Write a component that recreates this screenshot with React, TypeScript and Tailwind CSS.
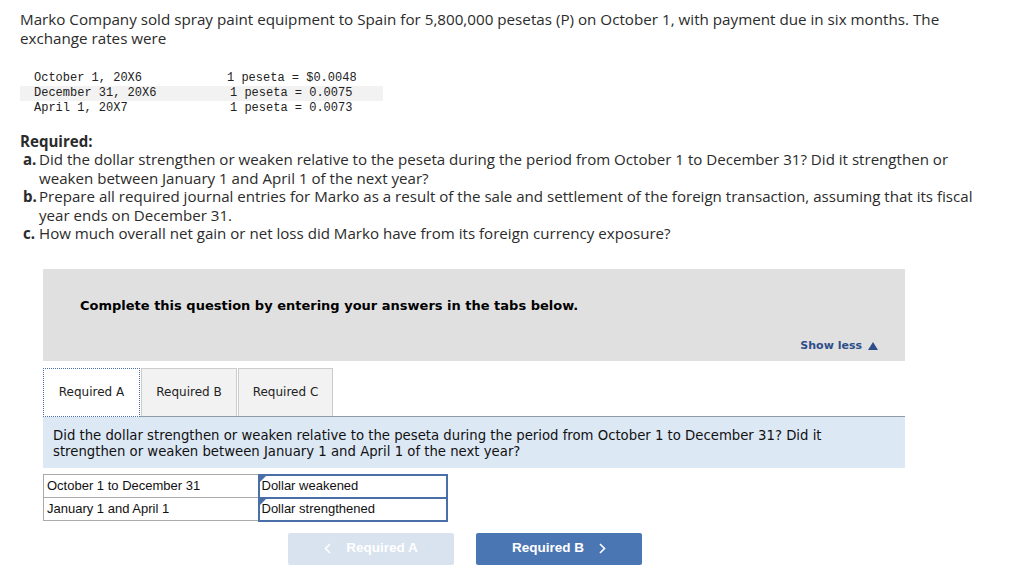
import React from 'react';

const rates = [
  { date: 'October 1, 20X6', rate: '1 peseta = $0.0048', shade: false, indent: false },
  { date: 'December 31, 20X6', rate: '1 peseta = 0.0075', shade: true, indent: true },
  { date: 'April 1, 20X7', rate: '1 peseta = 0.0073', shade: false, indent: true },
];

const answers = [
  { period: 'October 1 to December 31', value: 'Dollar weakened' },
  { period: 'January 1 and April 1', value: 'Dollar strengthened' },
];

const verdana = "font-['Verdana','DejaVu_Sans',sans-serif]";

const Chevron = ({ dir }: { dir: 'left' | 'right' }) => (
  <svg width="7" height="11" viewBox="0 0 7 11" fill="none">
    <path
      d={dir === 'left' ? 'M6 1 L1.5 5.5 L6 10' : 'M1 1 L5.5 5.5 L1 10'}
      stroke="white"
      strokeWidth="1.6"
    />
  </svg>
);

export default function App() {
  return (
    <div className="w-[1024px] h-[584px] bg-white text-[#333] overflow-hidden font-['Open_Sans',sans-serif]">
      <div className="pl-5 pt-[10px] pr-[60px] text-[15.2px] leading-[19px] text-[#2b2b2b]">
        Marko Company sold spray paint equipment to Spain for 5,800,000 pesetas (P) on October 1, with payment due in six months. The exchange rates were
      </div>

      <div className="mt-[23px] ml-5 w-[363px] font-['Liberation_Mono',monospace] text-[12px] leading-[15px] text-[#222]">
        {rates.map((r) => (
          <div key={r.date} className={`flex ${r.shade ? 'bg-[#f2f2f2]' : ''}`}>
            <span className="w-[193px] pl-[14px] whitespace-pre">{r.date}</span>
            <span className={`whitespace-pre ${r.indent ? 'pl-[17px]' : 'pl-[14px]'}`}>{r.rate}</span>
          </div>
        ))}
      </div>

      <div className="mt-[17px] pl-5 text-[15.1px] leading-[18.5px] text-[#2b2b2b]">
        <div className="font-bold leading-[17px]">Required:</div>
        <div className="flex pl-[3px]">
          <span className="w-4 font-bold">a.</span>
          <span className="w-[920px]">
            Did the dollar strengthen or weaken relative to the peseta during the period from October 1 to December 31? Did it strengthen or weaken between January 1 and April 1 of the next year?
          </span>
        </div>
        <div className="flex pl-[3px]">
          <span className="w-4 font-bold">b.</span>
          <span className="w-[950px]">
            Prepare all required journal entries for Marko as a result of the sale and settlement of the foreign transaction, assuming that its fiscal year ends on December 31.
          </span>
        </div>
        <div className="flex pl-[3px]">
          <span className="w-4 font-bold">c.</span>
          <span>How much overall net gain or net loss did Marko have from its foreign currency exposure?</span>
        </div>
      </div>

      <div className={`ml-[43px] mt-[26px] w-[862px] ${verdana}`}>
        <div className="h-[92px] bg-[#e0e0e0] flex flex-col">
          <div className="pl-[37px] pt-[27px] text-[13px] font-bold text-black">
            Complete this question by entering your answers in the tabs below.
          </div>
          <div className="mt-auto mb-[6px] pr-[27px] flex justify-end items-center gap-[6px] text-[11px] font-bold text-[#2d4e8a]">
            Show less
            <svg width="10" height="8" viewBox="0 0 10 8">
              <path d="M5 0 L10 8 L0 8 Z" fill="#2d4e8a" />
            </svg>
          </div>
        </div>

        <div className="mt-[7px] flex items-end border-b border-[#8e9bab] h-[49px]">
          <button className="h-[49px] w-[97px] bg-white border border-dotted border-[#4a6fb5] text-[12px] text-[#222] -mb-px">
            Required A
          </button>
          <button className="h-[48px] w-[96px] ml-px bg-[#f2f2f2] border border-[#ccc] border-b-0 text-[12px] text-[#222]">
            Required B
          </button>
          <button className="h-[48px] w-[95px] ml-px bg-[#f2f2f2] border border-[#ccc] border-b-0 text-[12px] text-[#222]">
            Required C
          </button>
        </div>

        <div className="h-[51px] bg-[#dde8f5] pl-[10px] pt-[11px] pr-[60px] text-[13.25px] leading-[16px] text-[#111]">
          Did the dollar strengthen or weaken relative to the peseta during the period from October 1 to December 31? Did it strengthen or weaken between January 1 and April 1 of the next year?
        </div>

        <table className="mt-[6px] border-collapse font-['Liberation_Sans',Arial,sans-serif] text-[13px] text-[#111]">
          <tbody>
            {answers.map((a) => (
              <tr key={a.period} className="h-[23px]">
                <td className="w-[215px] border border-[#aaa] pl-[3px] py-0">{a.period}</td>
                <td className="w-[188px] border-2 border-[#4a6fa8] pl-[2px] py-0 relative">
                  <span className="absolute left-0 top-0 w-0 h-0 border-t-[6px] border-r-[6px] border-t-[#4a6fa8] border-r-transparent" />
                  {a.value}
                </td>
              </tr>
            ))}
          </tbody>
        </table>

        <div className="mt-[11px] ml-[245px] flex gap-[22px] font-['Liberation_Sans',Arial,sans-serif] text-[13.5px] font-bold text-white">
          <button className="w-[166px] h-[32px] rounded-[2px] bg-[#d9e2ef] flex items-center justify-center gap-[15px]">
            <Chevron dir="left" />
            Required A
          </button>
          <button className="w-[166px] h-[32px] rounded-[2px] bg-[#4a76b4] flex items-center justify-center gap-[15px]">
            Required B
            <Chevron dir="right" />
          </button>
        </div>
      </div>
    </div>
  );
}
